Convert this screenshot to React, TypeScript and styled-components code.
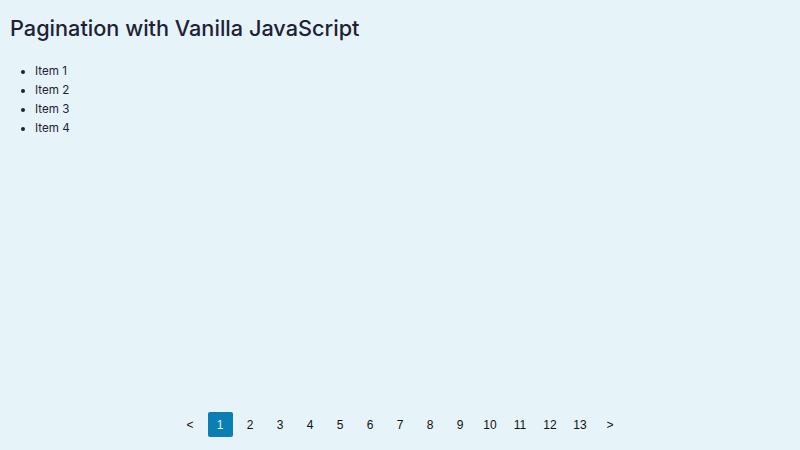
import React, { useState } from 'react';
import styled, { createGlobalStyle } from 'styled-components';

const COLORS = {
  page: '#e6f3f9',
  text: '#1f2236',
  active: '#0b7fb3',
};

const GlobalStyle = createGlobalStyle`
  html, body {
    margin: 0;
    padding: 0;
    height: 100%;
  }

  body {
    background-color: ${COLORS.page};
    font-family: Inter, "Noto Sans", sans-serif;
    color: ${COLORS.text};
  }

  #root {
    height: 100%;
  }
`;

const Page = styled.div`
  display: flex;
  flex-direction: column;
  height: 100%;
  box-sizing: border-box;
  padding: 15px 8px 13px;
`;

const Title = styled.h1`
  margin: 0 0 20px 2px;
  font-size: 21.7px;
  font-weight: 500;
  line-height: 27px;
`;

const ItemList = styled.ul`
  margin: 0;
  padding-left: 27px;
  flex: 1;
`;

const Item = styled.li`
  font-size: 11.6px;
  line-height: 19px;
`;

const Pagination = styled.nav`
  display: flex;
  justify-content: center;
  gap: 5px;
`;

const PageButton = styled.button<{ $active?: boolean }>`
  width: 25px;
  height: 25px;
  padding: 0;
  border: none;
  border-radius: 2px;
  font-family: "Liberation Sans", Arial, sans-serif;
  font-size: 12px;
  color: ${({ $active }) => ($active ? '#e6f3f9' : '#111')};
  background-color: ${({ $active }) => ($active ? COLORS.active : 'transparent')};
  cursor: pointer;
`;

const items = ['Item 1', 'Item 2', 'Item 3', 'Item 4'];
const pages = Array.from({ length: 13 }, (_, i) => i + 1);

export default function App() {
  const [current, setCurrent] = useState(1);

  return (
    <>
      <GlobalStyle />
      <Page>
        <Title>Pagination with Vanilla JavaScript</Title>

        <ItemList>
          {items.map((item) => (
            <Item key={item}>{item}</Item>
          ))}
        </ItemList>

        <Pagination>
          <PageButton onClick={() => setCurrent(Math.max(1, current - 1))}>&lt;</PageButton>
          {pages.map((page) => (
            <PageButton key={page} $active={page === current} onClick={() => setCurrent(page)}>
              {page}
            </PageButton>
          ))}
          <PageButton onClick={() => setCurrent(Math.min(13, current + 1))}>&gt;</PageButton>
        </Pagination>
      </Page>
    </>
  );
}
